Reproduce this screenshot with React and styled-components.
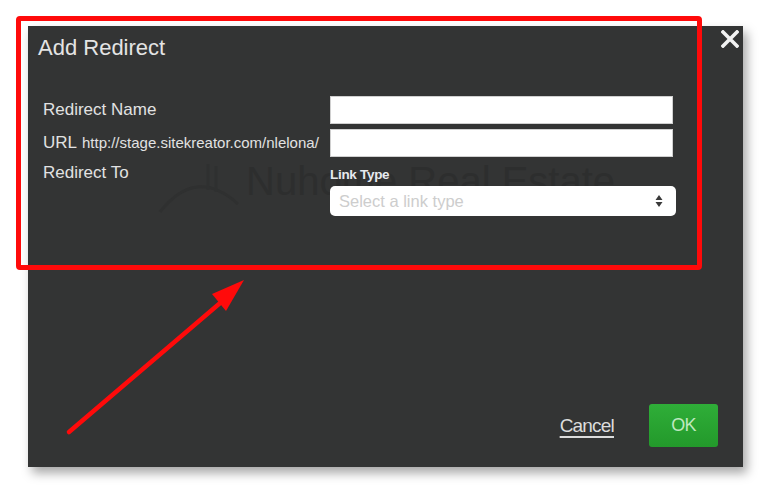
import React from 'react'
import styled, { createGlobalStyle } from 'styled-components'

const Global = createGlobalStyle`
  html, body { margin: 0; padding: 0; background: #fff; }
  body { font-family: "Liberation Sans", Arial, sans-serif; }
`

const Page = styled.div`
  position: relative;
  width: 768px;
  height: 495px;
  overflow: hidden;
  padding: 26px 0 0 28px;
  box-sizing: border-box;
`

const Dialog = styled.div`
  position: relative;
  width: 715px;
  height: 441px;
  background: #333434;
  box-shadow: 4px 6px 10px rgba(0, 0, 0, 0.35);
  display: flex;
  flex-direction: column;
  box-sizing: border-box;
`

const Watermark = styled.div`
  position: absolute;
  left: 118px;
  top: 120px;
  display: flex;
  align-items: center;
  color: #2d2e2e;
  font-size: 40px;
  white-space: nowrap;
  z-index: 0;
`

const Title = styled.h2`
  margin: 9px 0 0 10px;
  font-size: 22px;
  line-height: 26px;
  font-weight: normal;
  color: #e4e4e4;
  position: relative;
`

const Close = styled.button`
  position: absolute;
  top: 4px;
  right: 4px;
  width: 18px;
  height: 18px;
  padding: 0;
  border: 0;
  background: none;
  cursor: pointer;
`

const Form = styled.div`
  position: relative;
  margin-top: 35px;
  padding-left: 15px;
  display: grid;
  grid-template-columns: 287px 346px;
  row-gap: 5px;
`

const Label = styled.div`
  color: #e2e2e2;
  font-size: 17px;
  line-height: ${p => p.$lh || 28}px;
  white-space: nowrap;
`

const Small = styled.span`
  font-size: 15px;
  margin-left: 5px;
`

const Input = styled.input`
  width: 343px;
  height: 28px;
  box-sizing: border-box;
  border: 1px solid #d0d0d0;
  background: #fff;
  padding: 0 6px;
  margin: 0;
`

const Field = styled.div`
  display: flex;
  flex-direction: column;
`

const SubLabel = styled.div`
  margin-top: 6px;
  font-size: 13.5px;
  line-height: 14px;
  font-weight: bold;
  color: #e6e9ee;
  letter-spacing: -0.3px;
`

const Select = styled.div`
  margin-top: 4px;
  height: 30px;
  width: 346px;
  box-sizing: border-box;
  background: #fff;
  border-radius: 5px;
  display: flex;
  align-items: center;
  justify-content: space-between;
  padding: 0 13px 0 9px;
  color: #cdcdcd;
  font-size: 16.5px;
`

const Footer = styled.div`
  margin-top: auto;
  display: flex;
  justify-content: flex-end;
  align-items: center;
  gap: 35px;
  padding: 0 25px 20px 0;
`

const CancelLink = styled.a`
  color: #dcdcdc;
  font-size: 19px;
  text-decoration: underline;
  text-underline-offset: 4px;
  text-decoration-thickness: 2px;
  letter-spacing: -0.8px;
`

const OkButton = styled.button`
  width: 69px;
  height: 43px;
  border: 0;
  border-radius: 3px;
  background: linear-gradient(#2fae38, #23992b);
  color: #bfe8bf;
  font-size: 18px;
  font-family: inherit;
  letter-spacing: -0.8px;
`

const Highlight = styled.div`
  position: absolute;
  left: 16px;
  top: 16px;
  width: 686px;
  height: 254px;
  box-sizing: border-box;
  border: 5px solid #ff0a0a;
  border-radius: 4px;
  pointer-events: none;
`

const Annotation = styled.svg`
  position: absolute;
  left: 0;
  top: 0;
  pointer-events: none;
`

export default function App() {
  return (
    <Page>
      <Global />
      <Dialog>
        <Watermark>
          <svg width="100" height="70" viewBox="0 0 100 70">
            <path d="M14 66 Q50 20 92 58" stroke="#2f3030" strokeWidth="3" fill="none" />
            <path d="M62 18 L62 44 M70 20 L70 46" stroke="#2f3030" strokeWidth="3" />
          </svg>
          <span>Nuhome Real Estate</span>
        </Watermark>
        <Title>Add Redirect</Title>
        <Close aria-label="close">
          <svg width="18" height="18" viewBox="0 0 18 18">
            <path d="M2 2 L16 16 M16 2 L2 16" stroke="#f2f2f2" strokeWidth="3.6" strokeLinecap="square" />
          </svg>
        </Close>
        <Form>
          <Label>Redirect Name</Label>
          <Input />
          <Label>URL<Small>http://stage.sitekreator.com/nlelona/</Small></Label>
          <Input />
          <Label $lh={22}>Redirect To</Label>
          <Field>
            <SubLabel>Link Type</SubLabel>
            <Select>
              <span>Select a link type</span>
              <svg width="8" height="14" viewBox="0 0 8 14">
                <path d="M4 1 L7.5 6 L0.5 6 Z M4 13 L7.5 8 L0.5 8 Z" fill="#3a3a3a" />
              </svg>
            </Select>
          </Field>
        </Form>
        <Footer>
          <CancelLink>Cancel</CancelLink>
          <OkButton>OK</OkButton>
        </Footer>
      </Dialog>
      <Highlight />
      <Annotation width="768" height="495" viewBox="0 0 768 495">
        <line x1="69" y1="432" x2="226" y2="298" stroke="#ff0a0a" strokeWidth="4.5" strokeLinecap="round" />
        <path d="M244 280 L212 294 L226 311 Z" fill="#ff0a0a" />
      </Annotation>
    </Page>
  )
}
